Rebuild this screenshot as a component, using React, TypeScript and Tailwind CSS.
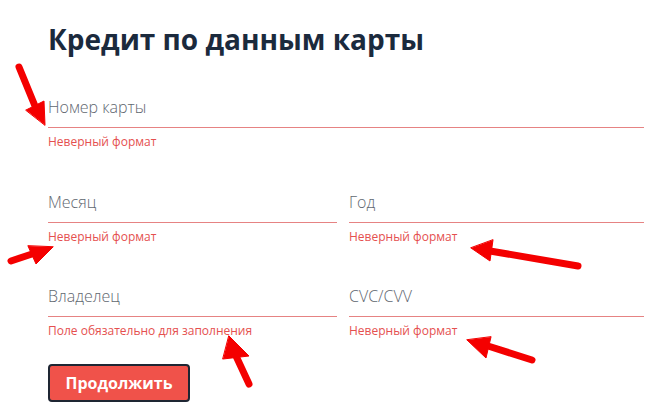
const font = { fontFamily: '"Open Sans", "Noto Sans", sans-serif' };

function Field({ label, error }: { label: string; error: string }) {
  return (
    <div>
      <div className="border-b border-[#e68383] pb-[8px]">
        <span className="block text-[16px] leading-[24px] font-light text-[#5f6770]">{label}</span>
      </div>
      <p className="mt-[6px] text-[12px] leading-[16px] text-[#e5504f]">{error}</p>
    </div>
  );
}

function Arrows() {
  const red = '#f40000';
  return (
    <svg className="absolute inset-0 pointer-events-none" width="660" height="408" viewBox="0 0 660 408">
      <g stroke={red} strokeWidth="7" strokeLinecap="round" fill={red}>
        <line x1="19" y1="67" x2="35" y2="106" />
        <polygon points="26,110 44,101 45,125" strokeWidth="1" />
        <line x1="11" y1="261" x2="32" y2="254" />
        <polygon points="28,246 36,264 53,247" strokeWidth="1" />
        <line x1="578" y1="266" x2="490" y2="251" />
        <polygon points="493,240 490,261 471,248" strokeWidth="1" />
        <line x1="249" y1="384" x2="236" y2="356" />
        <polygon points="223,359 249,356 229,336" strokeWidth="1" />
        <line x1="532" y1="360" x2="488" y2="346" />
        <polygon points="491,337 486,358 467,340" strokeWidth="1" />
      </g>
    </svg>
  );
}

export default function App() {
  return (
    <div className="relative w-[660px] h-[408px] overflow-hidden bg-white px-12 pt-[22px]" style={font}>
      <h1 className="text-[28px] leading-[34px] font-bold text-[#1b2a3d]">Кредит по данным карты</h1>

      <div className="mt-[39px] w-[596px]">
        <Field label="Номер карты" error="Неверный формат" />
      </div>

      <div className="mt-[40px] grid w-[596px] grid-cols-[289px_295px] gap-x-3 gap-y-[39px]">
        <Field label="Месяц" error="Неверный формат" />
        <Field label="Год" error="Неверный формат" />
        <Field label="Владелец" error="Поле обязательно для заполнения" />
        <Field label="CVC/CVV" error="Неверный формат" />
      </div>

      <button className="mt-[25px] flex h-[38px] w-[142px] items-center justify-center rounded-[4px] border-2 border-[#1e2633] bg-[#f0524a] text-[16px] font-bold text-white">
        Продолжить
      </button>

      <Arrows />
    </div>
  );
}
